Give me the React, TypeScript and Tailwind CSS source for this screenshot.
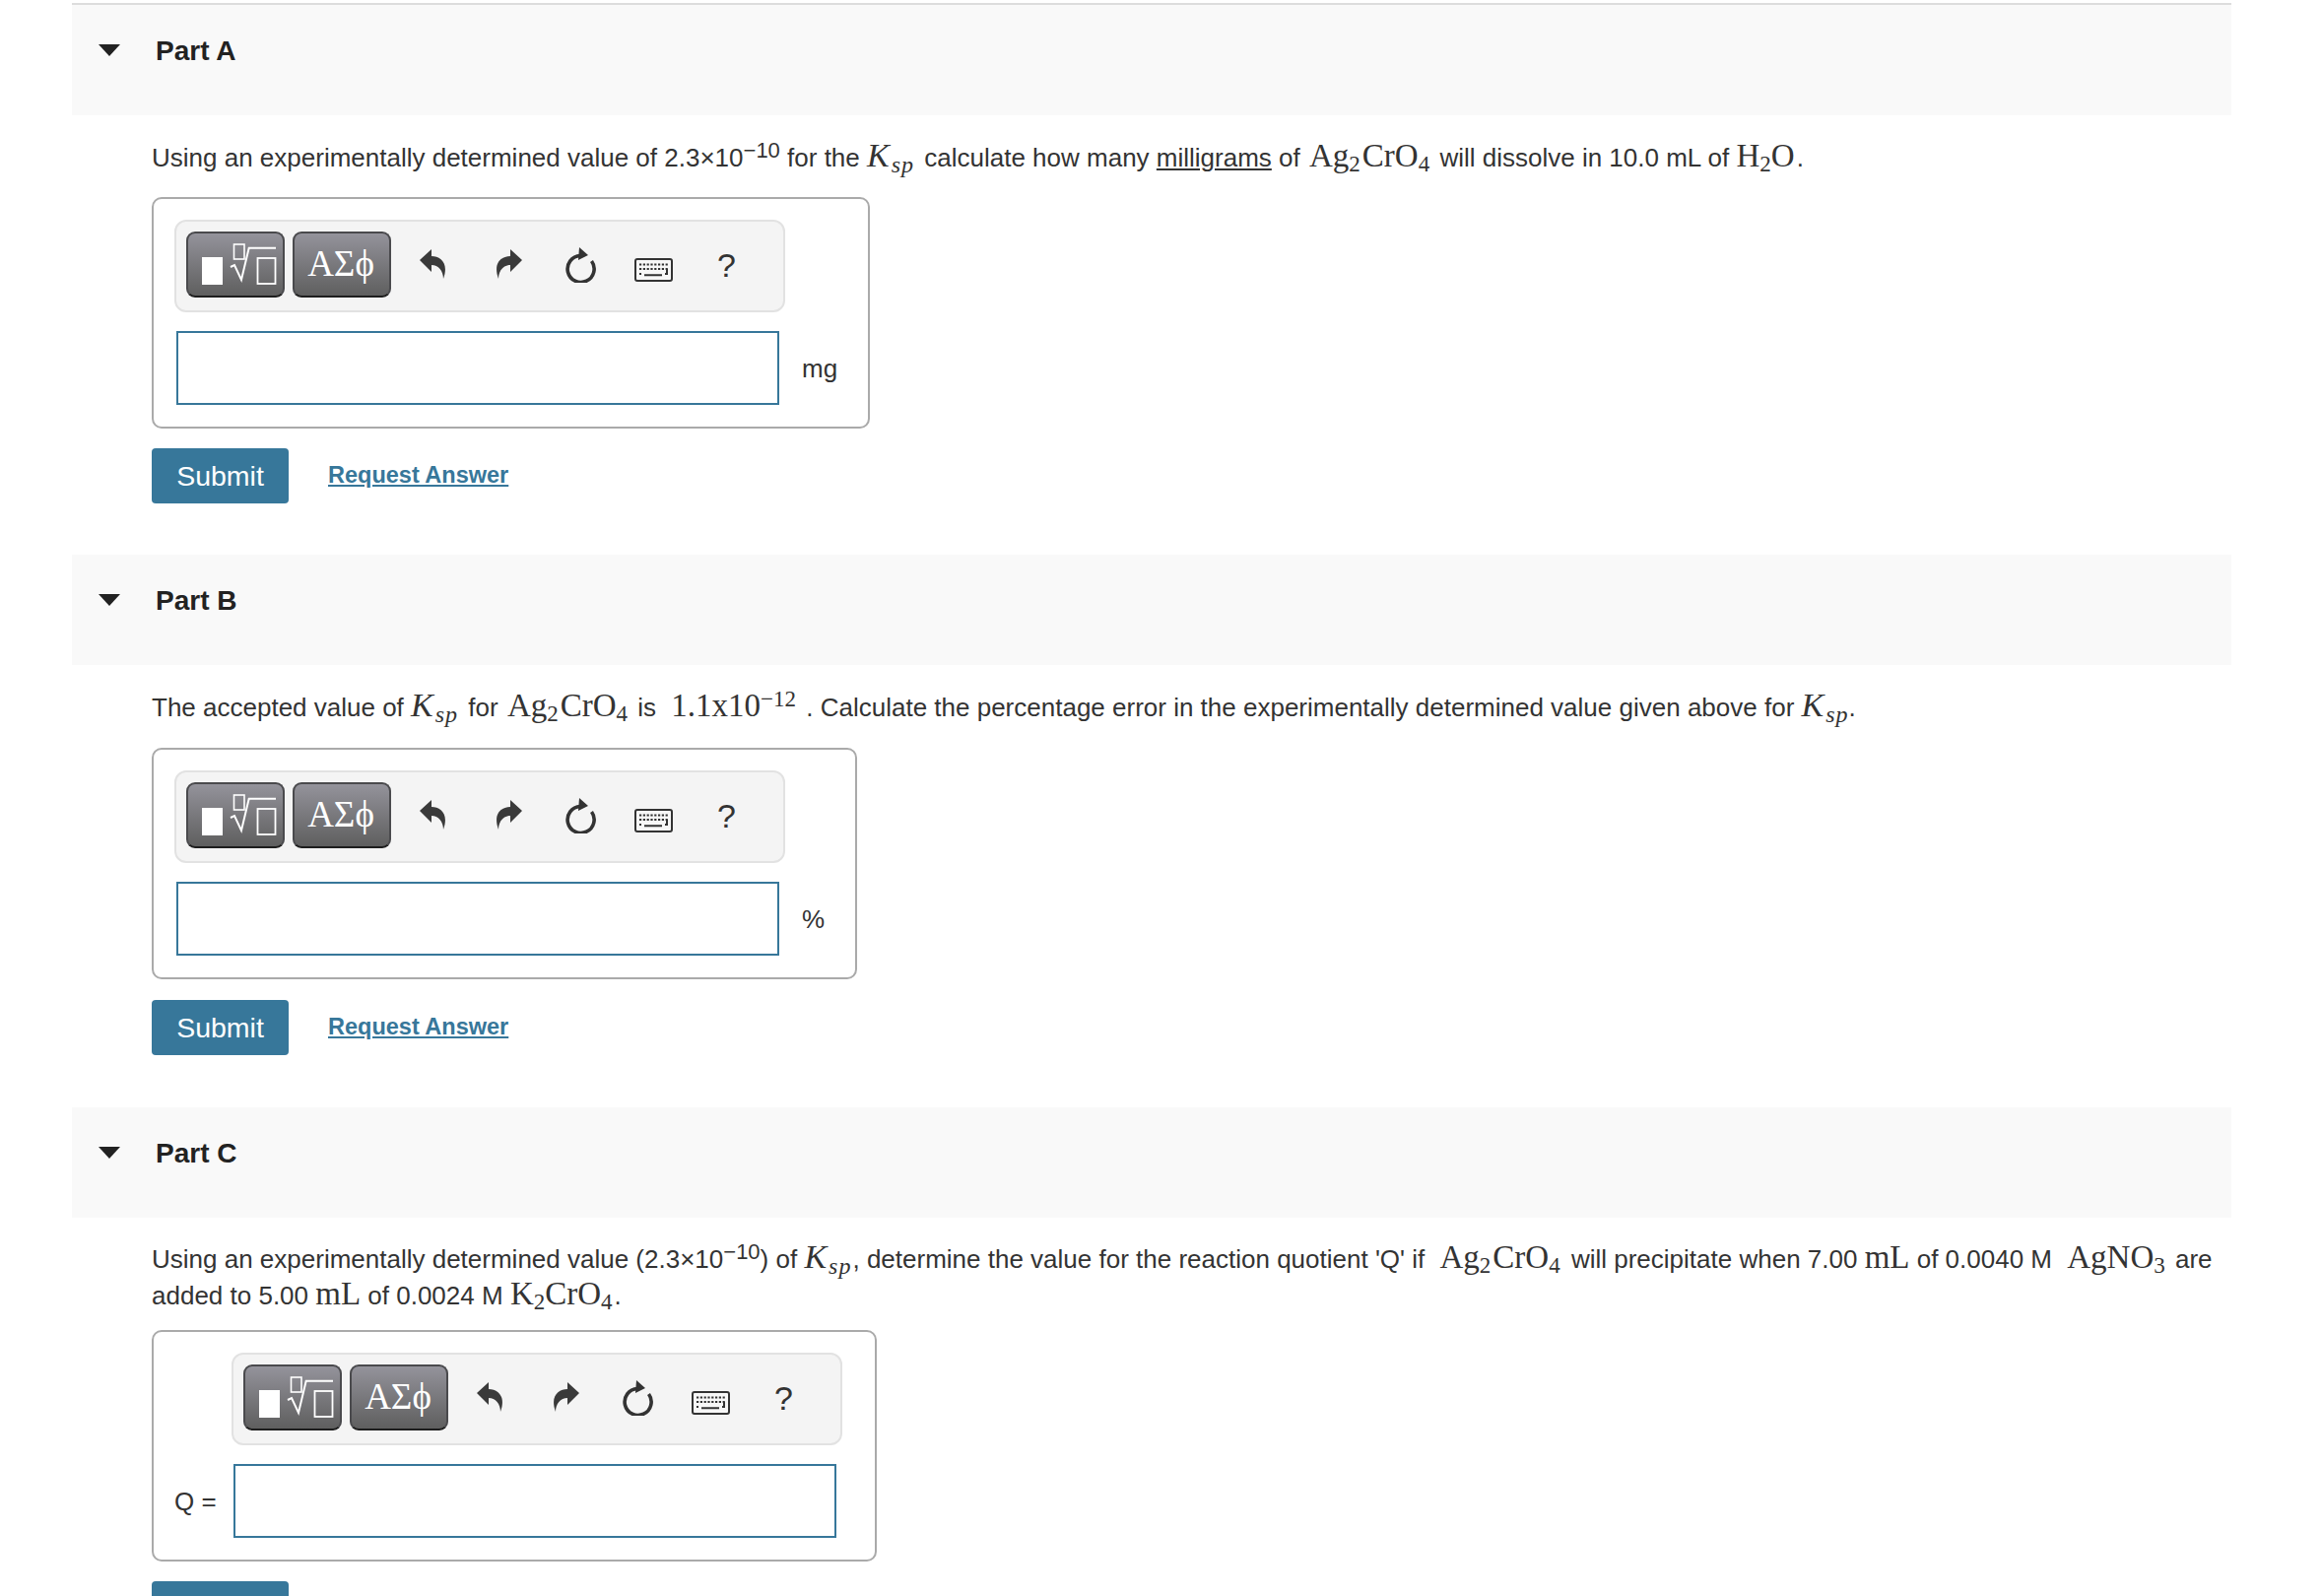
import React from "react";

const Undo = ({ flip = false }: { flip?: boolean }) => (
  <svg width="27" height="30" viewBox="0 0 27 30" className={flip ? "-scale-x-100" : ""}>
    <path d="M0 11 L12 0 V7 C21 7 30 14 24 30 C24 22 19 16 12 16 V23 Z" fill="#3a3a3a" />
  </svg>
);

const Reset = () => (
  <svg width="34" height="36" viewBox="0 0 34 36">
    <path d="M17 8.5 A13.5 13.5 0 1 0 28.5 14" fill="none" stroke="#333" strokeWidth="3.6" />
    <path d="M16 0 L25 8 L15 13 Z" fill="#333" />
  </svg>
);

const Keyboard = () => (
  <svg width="39" height="24" viewBox="0 0 39 24">
    <rect x="1" y="1" width="37" height="22" rx="2" fill="#f7f7f7" stroke="#333" strokeWidth="2" />
    <path d="M5 6.5 H34 M5 11 H34" stroke="#333" strokeWidth="2.2" strokeDasharray="2.2 1.6" />
    <path d="M5 16 H7 M10 17.2 H28 M31 16 H34 M33 11 V16" stroke="#333" strokeWidth="2" />
  </svg>
);

const TemplateIcon = () => (
  <svg width="95" height="63" viewBox="0 0 95 63" className="block">
    <rect x="13" y="24" width="21" height="28" fill="#fff" />
    <rect x="45.5" y="11" width="10.5" height="15" fill="none" stroke="#fff" strokeWidth="1.6" />
    <path d="M42 34 L46 32 L53 47 L60.7 14.7 H88" fill="none" stroke="#fff" strokeWidth="2" />
    <rect x="69.5" y="25" width="18" height="26" fill="none" stroke="#fff" strokeWidth="1.8" />
  </svg>
);

const MathBtn = ({ children }: { children: React.ReactNode }) => (
  <div className="flex h-[67px] w-[100px] shrink-0 items-center justify-center overflow-hidden rounded-[9px] border-2 border-[#4a4a4d] border-b-[#1e1e1e] bg-gradient-to-b from-[#94939b] to-[#5f5f5f]">
    {children}
  </div>
);

const Toolbar = ({ className = "" }: { className?: string }) => (
  <div className={"flex h-[94px] w-[620px] items-start rounded-[12px] border-2 border-[#e2e2e2] bg-[#f4f4f4] pl-[10px] pt-[10px] " + className}>
    <MathBtn><TemplateIcon /></MathBtn>
    <div className="ml-[8px]">
      <MathBtn>
        <span className="-ml-[2px] -mt-[2px] font-['Liberation_Serif',serif] text-[37px] leading-none text-white">ΑΣϕ</span>
      </MathBtn>
    </div>
    <div className="ml-[29px] mt-[18px]"><Undo /></div>
    <div className="ml-[50px] mt-[18px]"><Undo flip /></div>
    <div className="ml-[42px] mt-[16px]"><Reset /></div>
    <div className="ml-[38px] mt-[27px]"><Keyboard /></div>
    <div className="ml-[45px] mt-[14px] font-['Liberation_Sans',sans-serif] text-[34px] leading-[40px] text-[#333]">?</div>
  </div>
);

const AnswerInput = () => <div className="h-[75px] w-[612px] shrink-0 border-2 border-[#37779a] bg-white" />;

const Actions = ({ className = "mt-[20px]" }: { className?: string }) => (
  <div className={"flex items-center " + className}>
    <button className="h-[56px] w-[139px] rounded-[4px] bg-[#37779a] pb-[1px] text-[28.5px] text-white">Submit</button>
    <a className="ml-[40px] -mt-[2px] text-[23.5px] font-bold text-[#37779a] underline">Request Answer</a>
  </div>
);

const Header = ({ title }: { title: string }) => (
  <div className="flex h-[112px] bg-[#f9f9f9] pt-[40px]">
    <svg width="22" height="12" viewBox="0 0 22 12" className="ml-[27px] shrink-0">
      <path d="M0 0 H22 L11 12 Z" fill="#222" />
    </svg>
    <div className="-mt-[11px] ml-[36px] text-[28px] font-bold leading-[36px] text-[#222]">{title}</div>
  </div>
);

const M = ({ children, className = "" }: { children: React.ReactNode; className?: string }) => (
  <span className={"font-['Liberation_Serif',serif] text-[33px] leading-none " + className}>{children}</span>
);

const Sb = ({ children }: { children: React.ReactNode }) => (
  <span className="align-[-5px] text-[23px] leading-none">{children}</span>
);

const Ksp = ({ className = "" }: { className?: string }) => (
  <span className={"font-['Liberation_Serif',serif] italic leading-none " + className}>
    <span className="text-[34px] leading-none">K</span>
    <span className="ml-[2px] align-[-6px] text-[24px] leading-none tracking-[1px]">sp</span>
  </span>
);

const Ag = () => (
  <M className="ml-[2px] mr-[3px]">
    Ag<Sb>2</Sb><span className="ml-[2px]">CrO</span><Sb>4</Sb>
  </M>
);

const Sup10 = () => <span className="align-[9px] text-[22px] leading-none">−10</span>;

const Box = ({ children }: { children: React.ReactNode }) => (
  <div className="mt-[21px] ml-[81px] w-fit rounded-[10px] border-2 border-[#aaaaaa] pb-[22px] pl-[21px] pt-[21px]">
    {children}
  </div>
);

export default function App() {
  return (
    <div className="h-[1620px] overflow-hidden bg-white pl-[73px] pr-[92px] pt-[3px] font-['Liberation_Sans',sans-serif] text-[26px] leading-[36px] text-[#333]">
      <div className="border-t-2 border-[#dddddd]">
        <Header title="Part A" />
        <p className="ml-[81px] mt-[24px] h-[38px]">
          Using an experimentally determined value of 2.3×10<Sup10 /> for the <Ksp className="mr-[3px]" /> calculate how many{" "}
          <span className="underline">milligrams</span> of <Ag /> will dissolve in 10.0 mL of{" "}
          <M>H<Sb>2</Sb>O</M><span className="ml-[2px]">.</span>
        </p>
        <Box>
          <div className="pr-[31px]">
            <Toolbar />
            <div className="ml-[2px] mt-[19px] flex items-center">
              <AnswerInput />
              <span className="ml-[23px]">mg</span>
            </div>
          </div>
        </Box>
        <div className="ml-[81px]"><Actions /></div>
      </div>

      <div className="mt-[52px]">
        <Header title="Part B" />
        <p className="ml-[81px] mt-[23px] h-[40px]">
          The accepted value of <Ksp className="mr-[3px]" /> for <Ag /> is{" "}
          <M className="ml-[8px]">1.1x10<span className="align-[10px] text-[23px] leading-none">−12</span></M>
          <span className="ml-[3px]"> . Calculate the percentage error in the experimentally determined value given above for </span>
          <Ksp />.
        </p>
        <Box>
          <div className="pr-[31px]">
            <Toolbar />
            <div className="ml-[2px] mt-[19px] flex items-center">
              <AnswerInput />
              <span className="ml-[23px]">%</span>
            </div>
          </div>
        </Box>
        <div className="ml-[81px]"><Actions className="mt-[21px]" /></div>
      </div>

      <div className="mt-[53px]">
        <Header title="Part C" />
        <p className="ml-[81px] mt-[23px] h-[70px]">
          Using an experimentally determined value (2.3×10<Sup10 />) of <Ksp /><span className="ml-[1px]">,</span> determine the value for the reaction quotient 'Q' if{" "}
          <span className="ml-[6px]"><Ag /></span><span className="ml-[1px]"> will</span> precipitate when 7.00 <M>mL</M> of 0.0040 M{" "}
          <M className="ml-[8px] mr-[3px]">AgNO<Sb>3</Sb></M> are added to 5.00 <M>mL</M> of 0.0024 M{" "}
          <M>K<Sb>2</Sb>CrO<Sb>4</Sb></M><span className="ml-[2px]">.</span>
        </p>
        <Box>
          <div className="pr-[33px]">
            <Toolbar className="ml-[58px]" />
            <div className="mt-[19px] flex items-center">
              <span className="w-[60px]">Q =</span>
              <AnswerInput />
            </div>
          </div>
        </Box>
        <div className="ml-[81px]"><Actions /></div>
      </div>
    </div>
  );
}
